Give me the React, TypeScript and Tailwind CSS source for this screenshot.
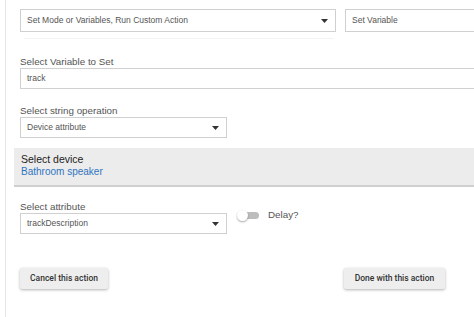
function Caret() {
  return (
    <svg width="7" height="4" viewBox="0 0 7 4" className="shrink-0">
      <path d="M0 0 L7 0 L3.5 4 Z" fill="#333" />
    </svg>
  )
}

function SelectBox({ value, width }: { value: string; width: string }) {
  return (
    <div className={`${width} h-[21px] border border-[#d0d0d0] bg-white flex items-center justify-between pl-[6px] pr-[7px]`}>
      <span className="text-[8.5px] text-[#555]">{value}</span>
      <Caret />
    </div>
  )
}

function Label({ children }: { children: React.ReactNode }) {
  return <div className="text-[9.8px] leading-[12px] text-[#555]">{children}</div>
}

export default function App() {
  return (
    <div className="w-[474px] h-[317px] overflow-hidden bg-white pl-[5px] font-['Liberation_Sans',Arial,sans-serif]">
      <div className="h-full border-l border-[#e6e6e6] pl-[14px] pt-[9px]">
        {/* top row */}
        <div className="flex gap-[9px] w-[480px]">
          <div className="w-[316px] h-[23px] border border-[#d0d0d0] flex items-center justify-between pl-[6px] pr-[7px]">
            <span className="text-[8.5px] text-[#555]">Set Mode or Variables, Run Custom Action</span>
            <Caret />
          </div>
          <div className="flex-1 h-[23px] border border-[#d0d0d0] flex items-center pl-[6px]">
            <span className="text-[8.5px] text-[#555]">Set Variable</span>
          </div>
        </div>
        <div className="h-px w-[310px] ml-[4px] mt-[6px] bg-[#f3f3f3]" />

        <div className="mt-[17px]">
          <Label>Select Variable to Set</Label>
          <div className="w-[470px] h-[21px] border border-[#d0d0d0] flex items-center pl-[6px]">
            <span className="text-[8.5px] text-[#555]">track</span>
          </div>
        </div>

        <div className="mt-[16px]">
          <Label>Select string operation</Label>
          <SelectBox value="Device attribute" width="w-[207px]" />
        </div>

        <div className="-ml-[6px] mt-[10px] bg-[#ececec] border-b-2 border-[#cfcfcf] pl-[7px] pt-[5px] pb-[7px]">
          <div className="text-[10.5px] leading-[13px] text-[#222]">Select device</div>
          <div className="text-[10px] leading-[12px] text-[#2f74c0]">Bathroom speaker</div>
        </div>

        <div className="mt-[14px] flex items-start gap-[10px]">
          <div>
            <Label>Select attribute</Label>
            <SelectBox value="trackDescription" width="w-[207px]" />
          </div>
          <div className="mt-[7px] flex items-center gap-[9px]">
            <div className="relative w-[22px] h-[11px] flex items-center">
              <div className="ml-[3px] w-[19px] h-[7px] rounded-full bg-[#bdbdbd]" />
              <div className="absolute left-0 top-0 w-[11px] h-[11px] rounded-full bg-white shadow-[0_1px_2px_rgba(0,0,0,0.35)]" />
            </div>
            <span className="text-[9.8px] text-[#555]">Delay?</span>
          </div>
        </div>

        <div className="mt-[34px] w-[425px] flex justify-between font-['Roboto',sans-serif]">
          <button className="w-[88px] h-[21px] rounded-[2px] bg-[#eeeeee] shadow-[0_1px_3px_rgba(0,0,0,0.3)] text-[8.5px] font-medium text-[#333]">
            Cancel this action
          </button>
          <button className="w-[101px] h-[21px] rounded-[2px] bg-[#eeeeee] shadow-[0_1px_3px_rgba(0,0,0,0.3)] text-[8.5px] font-medium text-[#333]">
            Done with this action
          </button>
        </div>
      </div>
    </div>
  )
}
